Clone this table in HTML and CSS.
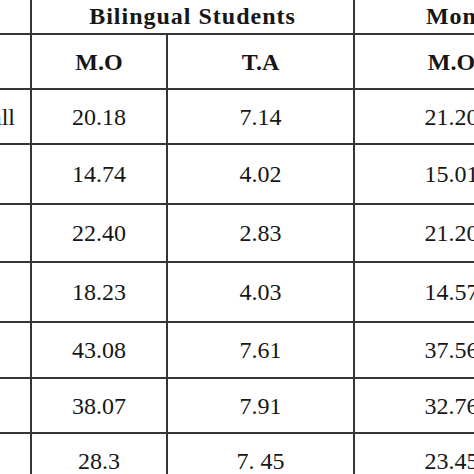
FILE: index.html
```html
<!DOCTYPE html>
<html>
<head>
<meta charset="utf-8">
<link rel="stylesheet" href="styles.css">
</head>
<body>
<div class="frame">
<table class="grid">
  <colgroup>
    <col class="c-label">
    <col class="c-b1">
    <col class="c-b2">
    <col class="c-m1">
    <col class="c-m2">
  </colgroup>
  <thead>
    <tr class="h-top">
      <th></th>
      <th colspan="2">Bilingual Students</th>
      <th colspan="2">Monolingual Students</th>
    </tr>
    <tr class="h-sub">
      <th></th>
      <th>M.O</th>
      <th>T.A</th>
      <th>M.O</th>
      <th>T.A</th>
    </tr>
  </thead>
  <tbody>
    <tr class="r55"><td class="lbl">Overall</td><td>20.18</td><td>7.14</td><td>21.20</td><td>6.98</td></tr>
    <tr class="r60"><td class="lbl">Part 1</td><td>14.74</td><td>4.02</td><td>15.01</td><td>3.87</td></tr>
    <tr class="r58"><td class="lbl">Part 2</td><td>22.40</td><td>2.83</td><td>21.20</td><td>3.12</td></tr>
    <tr class="r60"><td class="lbl">Part 3</td><td>18.23</td><td>4.03</td><td>14.57</td><td>4.41</td></tr>
    <tr class="r56"><td class="lbl">Part 4</td><td>43.08</td><td>7.61</td><td>37.56</td><td>7.02</td></tr>
    <tr class="r55"><td class="lbl">Part 5</td><td>38.07</td><td>7.91</td><td>32.76</td><td>7.35</td></tr>
    <tr class="r56"><td class="lbl">Mean</td><td>28.3</td><td>7. 45</td><td>23.45</td><td>6.80</td></tr>
  </tbody>
</table>
</div>
</body>
</html>
```
FILE: styles.css
```css
html, body {
  margin: 0;
  padding: 0;
  background: #ffffff;
}
body {
  width: 474px;
  height: 474px;
  overflow: hidden;
}
.frame {
  margin-left: -80px;
  margin-top: -4px;
}
.grid {
  border-collapse: collapse;
  table-layout: fixed;
  width: 823px;
  font-family: "Liberation Serif", "Times New Roman", serif;
  font-size: 24px;
  color: #161616;
}
.c-label { width: 110px; }
.c-b1 { width: 136px; }
.c-b2 { width: 187px; }
.c-m1 { width: 195px; }
.c-m2 { width: 195px; }
.grid th, .grid td {
  border: 2px solid #353535;
  padding: 0;
  text-align: center;
  vertical-align: middle;
  line-height: 1;
}
.grid th {
  font-weight: bold;
}
.h-top th {
  height: 35px;
  letter-spacing: 1px;
}
.h-sub th { height: 53px; }
.r55 td { height: 53px; }
.r56 td { height: 54px; }
.r58 td { height: 56px; }
.r60 td { height: 58px; }
.grid td.lbl {
  text-align: left;
  padding-left: 21px;
}
```
